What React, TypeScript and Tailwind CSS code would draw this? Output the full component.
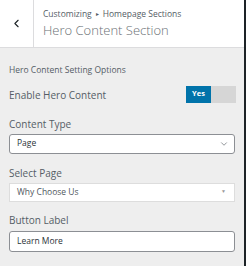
import { ChevronLeft, ChevronDown } from "lucide-react";

export default function App() {
  return (
    <div className="flex h-[266px] w-[246px] bg-[#1d2327] font-['Open_Sans',sans-serif]">
      <div className="flex w-[244px] flex-col bg-[#eeeeee]">
        <header className="flex h-[48px] border-b border-[#dcdcde] bg-white">
          <button className="flex w-[34px] items-center justify-center border-r border-[#dcdcde] text-[#1d2327]">
            <ChevronLeft size={13} strokeWidth={2} />
          </button>
          <div className="flex flex-col justify-center pl-[9px] leading-none text-[#555d66]">
            <span className="flex items-center text-[8.5px]">
              Customizing <span className="mx-[4px] text-[6px]">▸</span> Homepage Sections
            </span>
            <span className="mt-[6px] text-[13px] font-light text-[#6b7075]">Hero Content Section</span>
          </div>
        </header>

        <div className="flex flex-col px-[9px] pt-[18px] text-[#555d66]">
          <p className="text-[8.5px] leading-none">Hero Content Setting Options</p>

          <div className="mt-[11px] flex h-[17px] items-center justify-between">
            <span className="pt-[2px] text-[10px] leading-none">Enable Hero Content</span>
            <div className="mr-[-1px] flex h-[17px] w-[50px]">
              <span className="flex w-[25px] items-center justify-center bg-[#0073aa] text-[7.5px] font-bold text-white">Yes</span>
              <span className="w-[25px] bg-[#d6d6d6]" />
            </div>
          </div>

          <label className="mt-[16px] text-[10px] leading-none">Content Type</label>
          <div className="mt-[5px] flex h-[20px] items-center justify-between rounded-[3px] border border-[#8c8f94] bg-white pl-[7px] pr-[5px] text-[8.5px] text-[#2c3338]">
            <span>Page</span>
            <ChevronDown size={10} strokeWidth={1.5} className="text-[#50575e]" />
          </div>

          <label className="mt-[14px] text-[10px] leading-none">Select Page</label>
          <div className="mt-[5px] flex h-[19px] items-center justify-between border border-[#dddddd] bg-white pl-[7px] pr-[8px] text-[8.5px] text-[#50575e]">
            <span>Why Choose Us</span>
            <span className="text-[5px] text-[#999999]">▼</span>
          </div>

          <label className="mt-[13px] text-[10px] leading-none">Button Label</label>
          <div className="mt-[6px] flex h-[21px] items-center rounded-[3px] border border-[#8c8f94] bg-white pl-[7px] text-[8.5px] text-[#2c3338]">
            Learn More
          </div>
        </div>
      </div>
    </div>
  );
}
